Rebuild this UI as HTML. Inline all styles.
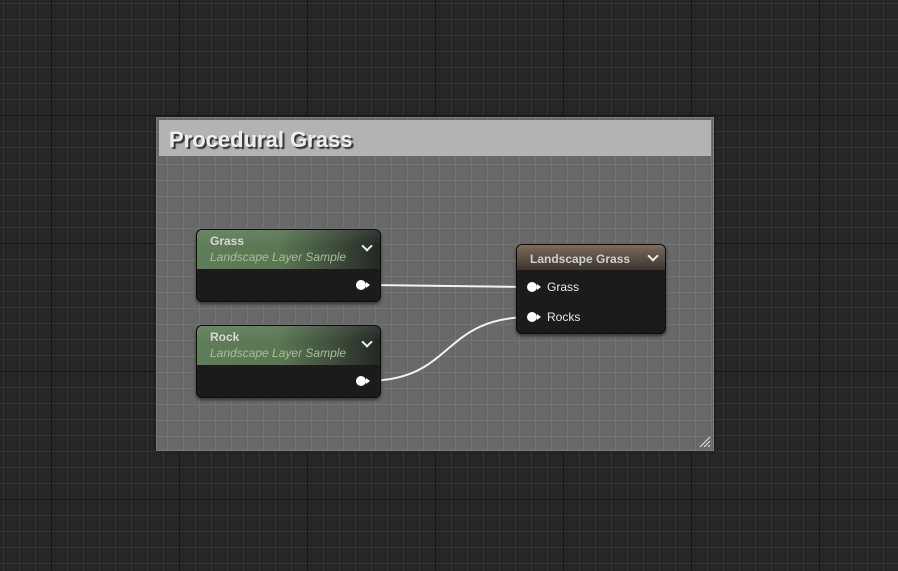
<!DOCTYPE html>
<html><head><style>
body{margin:0;width:898px;height:571px;overflow:hidden;background:#262626;font-family:"Liberation Sans",sans-serif;position:relative}
.bg{position:absolute;inset:0;
background-image:
linear-gradient(to right,#171717 0,#171717 1px,transparent 1px),
linear-gradient(to bottom,#171717 0,#171717 1px,transparent 1px),
linear-gradient(to right,#343434 0,#343434 1px,transparent 1px),
linear-gradient(to bottom,#343434 0,#343434 1px,transparent 1px);
background-size:128px 128px,128px 128px,16px 16px,16px 16px;
background-position:51px 115px,51px 115px,3px 3px,3px 3px}
.cm{position:absolute;left:156px;top:117px;width:558px;height:334px;background:#686868;border:1px solid #7a7a7a;box-sizing:border-box;box-shadow:0 0 3px #111;
background-image:linear-gradient(to right,#747474 0,#747474 1px,transparent 1px),linear-gradient(to bottom,#747474 0,#747474 1px,transparent 1px);
background-size:16px 16px;background-position:-102px -114px}
.ch{position:absolute;left:2px;top:2px;right:2px;height:36px;background:#b3b3b3;color:#eee;font-weight:bold;font-size:22px;line-height:40px;padding-left:10px;text-shadow:2px 2px 1px #333}
.node{position:absolute;box-sizing:border-box;background:#1b1c1a;border:1px solid #0c0c0c;border-radius:6px;box-shadow:0 2px 3px rgba(0,0,0,.5);overflow:hidden}
.hd{position:absolute;left:0;right:0;top:0}
.g{background:linear-gradient(180deg,rgba(255,255,255,.08),rgba(0,0,0,.0) 40%),linear-gradient(90deg,#5f7d58 0%,#5a7753 45%,#3e4d3b 75%,#232723 100%)}
.t{position:absolute;color:#d8d8d8;font-weight:bold;font-size:12px}
.s{position:absolute;color:#a9bf96;font-style:italic;font-size:12px}
.chev{position:absolute;width:6px;height:6px;border-right:2px solid #eee;border-bottom:2px solid #eee;transform:rotate(45deg)}
.pin{position:absolute;width:10px;height:10px;border-radius:50%;background:#fff}
.pin:after{content:"";position:absolute;left:10px;top:2px;border-left:4px solid #fff;border-top:3px solid transparent;border-bottom:3px solid transparent}
.pl{position:absolute;color:#e8e8e8;font-size:12px}
</style></head><body>
<div class="bg"></div>
<div class="cm"><div class="ch">Procedural Grass</div>
<svg style="position:absolute;right:2px;bottom:2px" width="12" height="12"><path d="M11 1L1 11M11 5L5 11M11 9L9 11" stroke="#ddd" stroke-width="1.2"/></svg></div>
<svg style="position:absolute;left:0;top:0" width="898" height="571"><path d="M366 285 L531 287" stroke="#f2f2f2" stroke-width="2" fill="none"/><path d="M366 381 C455 381 440 317 531 317" stroke="#f2f2f2" stroke-width="2" fill="none"/></svg>
<div class="node" style="left:196px;top:229px;width:185px;height:73px">
<div class="hd g" style="height:39px"></div>
<div class="t" style="left:13px;top:4px">Grass</div>
<div class="s" style="left:13px;top:20px">Landscape Layer Sample</div>
<div class="chev" style="left:166px;top:12px"></div>
<div class="pin" style="left:159px;top:50px"></div>
</div>
<div class="node" style="left:196px;top:325px;width:185px;height:73px">
<div class="hd g" style="height:39px"></div>
<div class="t" style="left:13px;top:4px">Rock</div>
<div class="s" style="left:13px;top:20px">Landscape Layer Sample</div>
<div class="chev" style="left:166px;top:12px"></div>
<div class="pin" style="left:159px;top:50px"></div>
</div>
<div class="node" style="left:516px;top:244px;width:150px;height:90px">
<div class="hd" style="height:25px;background:linear-gradient(180deg,#7d6b5a,#3a342e)"></div>
<div class="t" style="left:13px;top:7px;color:#d0d0d0">Landscape Grass</div>
<div class="chev" style="left:132px;top:7px"></div>
<div class="pin" style="left:10px;top:37px"></div><div class="pl" style="left:30px;top:35px">Grass</div>
<div class="pin" style="left:10px;top:67px"></div><div class="pl" style="left:30px;top:65px">Rocks</div>
</div>
</body></html>
